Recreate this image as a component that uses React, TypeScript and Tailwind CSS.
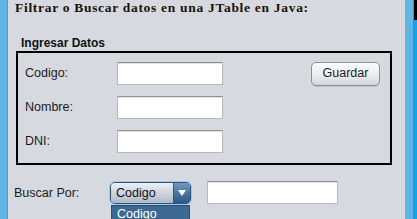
import React from "react";

const field =
  "h-[23px] bg-white border border-[#b7b9bc] border-t-[#8e9093] shadow-[inset_0_1px_0_#e2e3e5]";

const Row: React.FC<{ label: string; children?: React.ReactNode }> = ({ label, children }) => (
  <div className="flex items-center h-[23px]">
    <span className="w-[92px] text-[12.5px] text-[#1b1b1b]">{label}</span>
    <div className={`${field} w-[106px]`} />
    {children}
  </div>
);

export default function App() {
  return (
    <div
      className="flex w-[417px] h-[219px] overflow-hidden bg-[#d6d9df]"
      style={{ fontFamily: '"Liberation Sans", Arial, sans-serif' }}
    >
      {/* left window border */}
      <div className="w-[7px] bg-[#60b5e6]" />
      <div className="w-[1px] bg-[#4a9fd6]" />

      <div className="relative w-[397px] h-full">
        <div
          className="h-[16px] pl-[7px] text-[13.5px] font-bold leading-[16px] tracking-[0.7px] whitespace-nowrap text-[#1a1208]"
          style={{ fontFamily: '"Liberation Serif", "Times New Roman", serif' }}
        >
          Filtrar o Buscar datos en una JTable en Java:
        </div>

        <div className="mt-[20px] h-[14px] pl-[13px] text-[12px] font-bold leading-[14px] text-[#111]">
          Ingresar Datos
        </div>

        <div className="mt-[1px] ml-[8px] w-[376px] h-[114px] border-2 border-black pt-[9px] pl-[7px] flex flex-col gap-[11px]">
          <Row label="Codigo:">
            <button className="ml-[88px] w-[69px] h-[24px] rounded-[5px] border border-[#8c8f94] bg-gradient-to-b from-[#fbfbfc] via-[#eceef1] to-[#d3d7dd] shadow-[0_1px_0_#c0c3c8] text-[12.5px] text-[#1b1b1b]">
              Guardar
            </button>
          </Row>
          <Row label="Nombre:" />
          <Row label="DNI:" />
        </div>

        <div className="mt-[16px] flex items-start">
          <span className="w-[102px] pl-[6px] pt-[4px] text-[12.5px] text-[#1b1b1b] leading-[16px]">
            Buscar Por:
          </span>
          <div className="relative mt-[1px]">
            <div className="flex w-[81px] h-[22px] rounded-[5px] border border-[#2d557a] overflow-hidden shadow-[0_0_0_1px_#a9c6e2]">
              <div className="flex-1 flex items-center pl-[5px] text-[12.5px] text-[#111] bg-gradient-to-b from-[#eef1f5] via-[#cdd4de] to-[#aeb9c7]">
                Codigo
              </div>
              <div className="w-[17px] flex items-center justify-center border-l border-[#2d557a] bg-gradient-to-b from-[#7298bb] via-[#4a77a1] to-[#2d5a84]">
                <svg width="8" height="6" viewBox="0 0 8 6">
                  <path d="M0 0h8L4 6z" fill="#fff" />
                </svg>
              </div>
            </div>
            <div className="absolute left-[1px] top-[23px] w-[79px] h-[14px] overflow-hidden bg-[#3b6991] border border-b-0 border-[#2a4f72] pl-[5px] text-[12.5px] leading-[16px] text-white">
              Codigo
            </div>
          </div>
          <div className={`${field} ml-[16px] w-[131px]`} />
        </div>
      </div>

      {/* right window border */}
      <div className="w-[8px] bg-[#62b6e6]" />
      <div className="w-[1px] bg-[#3b90c9]" />
      <div className="w-[3px] bg-[#19a0eb] flex flex-col">
        <div className="h-[20px] bg-black" />
      </div>
    </div>
  );
}
